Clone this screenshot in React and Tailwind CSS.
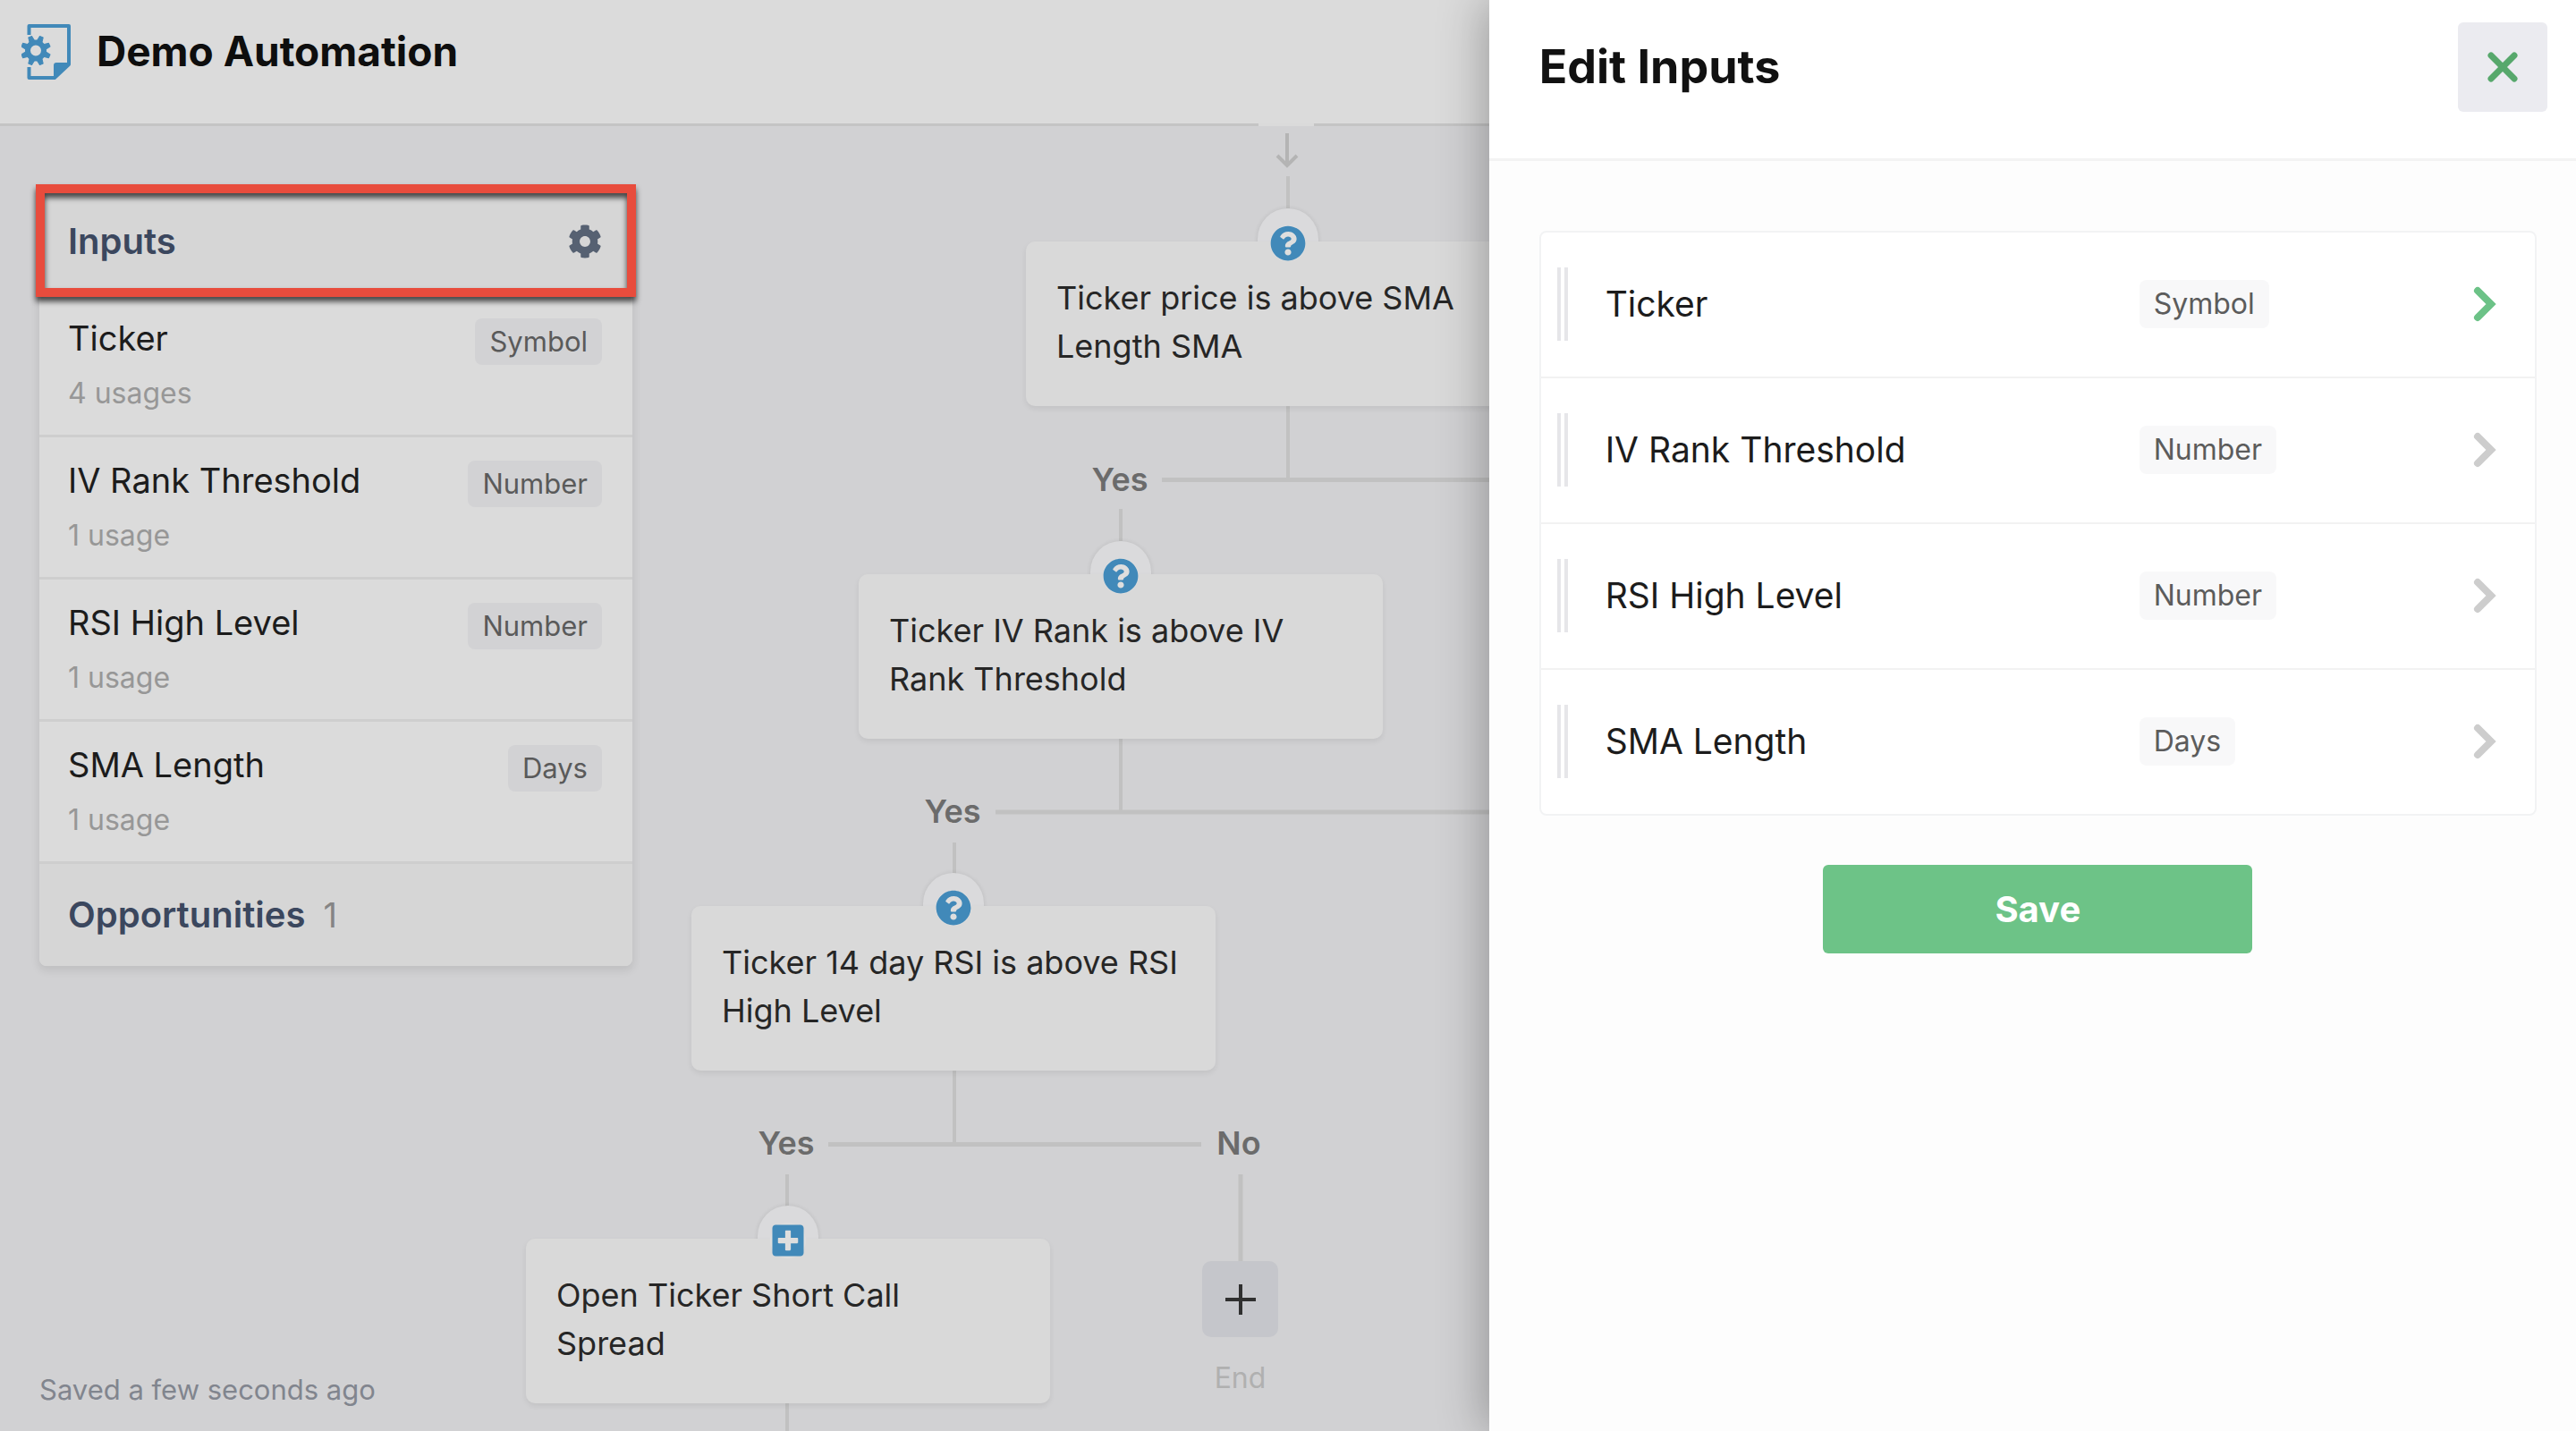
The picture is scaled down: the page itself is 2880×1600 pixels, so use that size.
import React from 'react';
import { FaCog, FaPlusSquare, FaQuestionCircle } from 'react-icons/fa';

const inputs = [
    { id: 1, name: 'Ticker', type: 'Symbol', usages: '4 usages', active: true },
    { id: 2, name: 'IV Rank Threshold', type: 'Number', usages: '1 usage' },
    { id: 3, name: 'RSI High Level', type: 'Number', usages: '1 usage' },
    { id: 4, name: 'SMA Length', type: 'Days', usages: '1 usage' }
];

const teeth = [22.5, 67.5, 112.5, 157.5, 202.5, 247.5, 292.5, 337.5];

function AutomationIcon() {
    return (
        <svg viewBox="0 0 56 64" className="w-14 h-16 shrink-0" fill="none" aria-hidden="true">
            <path d="M8.5 13V3H53V46L37 61H8.5V49" stroke="#4189b9" strokeWidth="4" strokeLinejoin="round" />
            <path d="M36 62V47q0-3 3-3H54Z" fill="#4189b9" />
            <circle cx="16" cy="30.5" r="9" stroke="#4189b9" strokeWidth="6" />
            {teeth.map((angle) => (
                <path key={angle} d="M14 14h4l1 6h-6Z" fill="#4189b9" stroke="#4189b9" strokeLinejoin="round" transform={`rotate(${angle} 16 30.5)`} />
            ))}
        </svg>
    );
}

function InputsCard() {
    return (
        <section className="w-[663px] bg-[#dbdbdb] rounded-lg shadow-[0_4px_8px_2px_rgba(0,0,0,0.08)]">
            <div className="relative flex items-center justify-between h-[120px] pl-8 pr-[34px] bg-[#d6d6d6]">
                <h2 className="text-[40px] leading-[48px] font-semibold text-[#3b475e]">Inputs</h2>
                <button aria-label="Input settings" className="text-[#566172]">
                    <FaCog size={38} />
                </button>
                <div className="absolute -inset-x-1 -top-1 -bottom-0.5 border-[10px] border-[#e84c3d] drop-shadow-[0_5px_3px_rgba(0,0,0,0.7)] pointer-events-none" />
            </div>
            <ul>
                {inputs.map((input) => (
                    <li key={input.id} className="flex items-start justify-between pl-8 pr-[34px] py-6 border-b-[3px] border-[#cecece]">
                        <div>
                            <div className="text-[38px] leading-[48px] text-[#1c1c1c]">{input.name}</div>
                            <div className="mt-4 text-[32px] leading-[44px] text-[#979797]">{input.usages}</div>
                        </div>
                        <span className="mt-0.5 px-4 rounded-lg bg-[#d2d2d4] text-[31px] leading-[52px] text-[#5a5a5a]">{input.type}</span>
                    </li>
                ))}
            </ul>
            <div className="flex items-center gap-5 h-[114px] pl-8 pr-[34px] bg-[#d6d6d6] rounded-b-lg">
                <h2 className="text-[40px] leading-[48px] font-semibold text-[#3b475e]">Opportunities</h2>
                <span className="text-[38px] leading-[48px] text-[#858585]">1</span>
            </div>
        </section>
    );
}

function FlowNode({ className, icon, children }) {
    return (
        <div className={`absolute w-[586px] h-[184px] ${className}`}>
            <div className="absolute left-1/2 -translate-x-1/2 -top-[37px] w-[68px] h-[74px] rounded-full bg-[#dadadc] shadow-[0_0_4px_1px_rgba(0,0,0,0.07)]" />
            <div className="relative w-full h-full rounded-[10px] bg-[#d9d9d9] shadow-[0_3px_6px_rgba(0,0,0,0.07)] px-[34px] pt-9 text-[36px] leading-[54px] text-[#262626]">
                {children}
            </div>
            <div className="absolute left-1/2 -translate-x-1/2 -top-[18px] rounded-full bg-[#dedede] text-[#4189b9]">
                {icon}
            </div>
        </div>
    );
}

function BranchLabel({ className, children }) {
    return (
        <span className={`absolute -translate-x-1/2 text-[36px] leading-[48px] font-semibold text-[#6b6b6b] ${className}`}>
            {children}
        </span>
    );
}

function Flow() {
    return (
        <div className="absolute inset-0">
            <div className="absolute left-[1407px] -top-[3px] w-[62px] h-[3px] bg-[#dadada]" />
            <svg className="absolute left-0 top-0 w-full h-full" fill="none" stroke="#c1c1c1" strokeWidth="4" aria-hidden="true">
                <path d="M1439 8V43M1428 33L1439 44L1450 33" stroke="#b4b4b4" />
                <path d="M1440 56V92M1440 312V395" />
                <path d="M1299 395.5H1900" strokeWidth="5" />
                <path d="M1253 428V464M1253 684V767" />
                <path d="M1113 767H1900" strokeWidth="5" />
                <path d="M1067 801V837M1067 1055V1138" />
                <path d="M926 1138.5H1343" strokeWidth="5" />
                <path d="M880 1172V1208M880 1426V1600" />
                <path d="M1387 1172V1270" strokeWidth="5" />
            </svg>

            <FlowNode className="left-[1147px] top-[129px]" icon={<FaQuestionCircle size={40} />}>
                Ticker price is above SMA<br />Length SMA
            </FlowNode>
            <BranchLabel className="left-[1252px] top-[371px]">Yes</BranchLabel>

            <FlowNode className="left-[960px] top-[501px]" icon={<FaQuestionCircle size={40} />}>
                Ticker IV Rank is above IV<br />Rank Threshold
            </FlowNode>
            <BranchLabel className="left-[1065px] top-[742px]">Yes</BranchLabel>

            <FlowNode className="left-[773px] top-[872px]" icon={<FaQuestionCircle size={40} />}>
                Ticker 14 day RSI is above RSI<br />High Level
            </FlowNode>
            <BranchLabel className="left-[879px] top-[1113px]">Yes</BranchLabel>
            <BranchLabel className="left-[1385px] top-[1113px]">No</BranchLabel>

            <FlowNode className="left-[588px] top-[1244px]" icon={<FaPlusSquare size={40} />}>
                Open Ticker Short Call<br />Spread
            </FlowNode>

            <div className="absolute left-[1344px] top-[1269px] flex flex-col items-center gap-6">
                <button aria-label="Add step" className="flex items-center justify-center w-[85px] h-[85px] rounded-[10px] bg-[#c5c6cb]">
                    <svg viewBox="0 0 34 34" className="w-[34px] h-[34px]" stroke="#303030" strokeWidth="4" aria-hidden="true">
                        <path d="M17 0V34M0 17H34" />
                    </svg>
                </button>
                <span className="text-[32px] leading-[44px] text-[#b0b0b0]">End</span>
            </div>
        </div>
    );
}

function EditInputsPanel() {
    return (
        <aside className="relative w-[42.2%] shrink-0 flex flex-col bg-[#fdfdfd] shadow-[-4px_0_50px_rgba(0,0,0,0.3)]">
            <div className="flex items-start justify-between h-[180px] pl-14 pr-8 pt-[25px] bg-white border-b-[3px] border-[#f3f3f3]">
                <h1 className="text-[52px] leading-[100px] font-bold text-[#111111]">Edit Inputs</h1>
                <button aria-label="Close" className="flex items-center justify-center w-[100px] h-[100px] rounded-md bg-[#ebebf0]">
                    <svg viewBox="0 0 34 34" className="w-[34px] h-[34px]" stroke="#57a86c" strokeWidth="7" strokeLinecap="round" aria-hidden="true">
                        <path d="M4 4L30 30M30 4L4 30" />
                    </svg>
                </button>
            </div>

            <div className="flex flex-col items-center pl-14 pr-11 pt-[78px]">
                <ul className="w-full rounded-lg border-2 border-[#f2f3f4] bg-white">
                    {inputs.map((input) => (
                        <li key={input.id} className="border-b-2 last:border-b-0 border-[#f2f2f2]">
                            <button className="grid grid-cols-[54px_597px_1fr_auto] items-center w-full h-[161px] pl-[18px] pr-[42px] pb-0.5 text-left">
                                <span className="w-3 h-[82px] border-x-4 border-[#e6e6e9]" />
                                <span className="text-[39px] leading-[48px] text-[#1c1c1c]">{input.name}</span>
                                <span className="justify-self-start px-4 rounded-lg bg-[#f8f8f9] text-[32px] leading-[54px] text-[#5c5c5c]">{input.type}</span>
                                <svg
                                    viewBox="0 0 28 40"
                                    className={`w-7 h-10 ${input.active ? 'stroke-[#6cc287]' : 'stroke-[#cdcdcd]'}`}
                                    fill="none"
                                    strokeWidth="8"
                                    strokeLinecap="round"
                                    aria-hidden="true"
                                >
                                    <path d="M6 5L21 20L6 35" />
                                </svg>
                            </button>
                        </li>
                    ))}
                </ul>
                <button className="mt-[55px] w-[480px] h-[99px] rounded-md bg-[#6dc387] text-[40px] leading-[48px] font-bold text-white">
                    Save
                </button>
            </div>
        </aside>
    );
}

export default function App() {
    return (
        <div className="flex min-h-screen overflow-hidden font-['Inter','Liberation_Sans',sans-serif]">
            <div className="flex-1 min-w-0 flex flex-col bg-[#d1d1d3]">
                <header className="flex items-start gap-7 h-[141px] px-6 pt-[26px] bg-[#dbdbdb] border-b-[3px] border-[#c4c4c4]">
                    <AutomationIcon />
                    <h1 className="text-[46px] leading-[62px] font-bold text-[#0e0e0e]">Demo Automation</h1>
                </header>
                <main className="relative flex-1 flex flex-col justify-between pt-[69px] pl-11 pb-6">
                    <Flow />
                    <div className="relative">
                        <InputsCard />
                    </div>
                    <p className="relative text-[31px] leading-[44px] text-[#81858e]">Saved a few seconds ago</p>
                </main>
            </div>
            <EditInputsPanel />
        </div>
    );
}
